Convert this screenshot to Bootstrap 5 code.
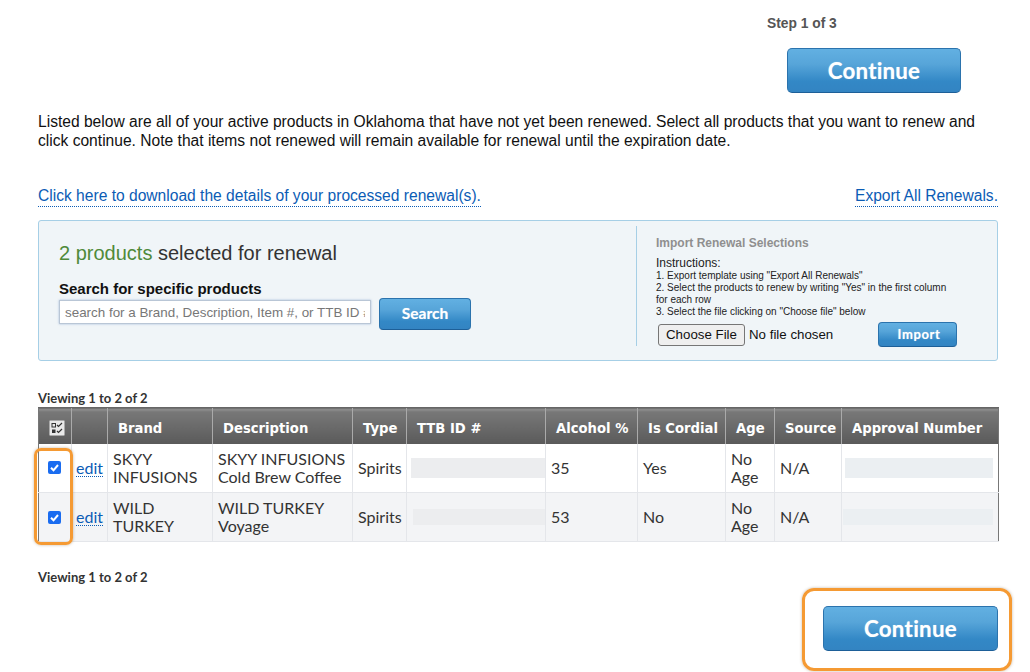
<!DOCTYPE html>
<html lang="en">
<head>
<meta charset="utf-8">
<title>Renewals</title>
<link rel="stylesheet" href="https://cdn.jsdelivr.net/npm/bootstrap@5.3.0/dist/css/bootstrap.min.css">
<style>
html,body{height:672px;overflow:hidden}
body{font-family:"Liberation Sans",Arial,sans-serif;background:#fff;color:#111;position:relative}
.page-wrap{padding:0 32px 0 38px}
.step-col{width:174px;margin-left:auto;margin-right:37px;padding-top:16px}
.step-label{font-size:13.8px;font-weight:700;color:#555;line-height:16px;margin-left:-20px}
.blue-btn{font-family:Lato,sans-serif;font-weight:700;color:#fff;background:linear-gradient(#62b0e2 0%,#57a5d9 35%,#3388c6 75%,#3384c2 100%);border:1px solid #2b73ad;border-bottom-color:#1d5f98;border-radius:5px;padding:0;text-shadow:0 0 1px rgba(255,255,255,.5);display:flex;align-items:center;justify-content:center}
.btn-top{width:174px;height:45px;font-size:22.3px;margin-top:16px;letter-spacing:.2px}
.intro{font-size:15.6px;line-height:19px;margin:19px 0 0;color:#111}
.link-row{margin-top:36px;font-size:15.6px;line-height:20px}
.link-row a{color:#0b5cb5;text-decoration:none;border-bottom:1px dotted #0b5cb5}
.panel-box{margin-top:13px;height:141px;background:#f0f5f8;border:1px solid #a6cfe6;border-radius:3px;display:flex}
.panel-left{width:597px;padding:18px 20px 0}
.count-line{font-size:20px;line-height:28px;color:#333;margin:0}
.count-line span{color:#4f8a3a}
.search-label{font-size:15px;font-weight:700;color:#111;line-height:18px;margin:13px 0 0}
.search-input{width:312px;height:24px;margin-top:2px;font-family:"Liberation Sans",sans-serif;font-size:13.4px;border:1px solid #b9c6d6;box-shadow:0 0 2px rgba(90,130,190,.5);padding:0 5px;background:#fff;border-radius:0;outline:0}
.search-input::placeholder{color:#777;opacity:1}
.btn-search{width:92px;height:32px;font-size:15.5px;border-radius:4px;margin-left:8px}
.panel-right{margin-top:5px;height:120px;border-left:1px solid #a6cfe6;padding:9px 0 0 19px;width:360px}
.import-title{font-size:12px;font-weight:700;color:#8f8f8f;line-height:16px}
.instr-head{font-size:12px;line-height:13px;margin-top:6px;color:#222}
.instr{font-size:10px;line-height:12px;color:#222;width:296px}
.file-row{margin-top:4px;align-items:center}
.choose-btn{font-size:13.3px;line-height:18px;background:#efefef;border:1px solid #767676;border-radius:3px;color:#111;padding:1px 7px;width:87px;height:22px;white-space:nowrap;margin-left:2px}
.nofile{font-size:13.3px;margin-left:4px;color:#111;width:129px}
.btn-import{width:79px;height:25px;font-size:13px;border-radius:4px;letter-spacing:.6px;padding-left:3px}
.view-line{font-family:Lato,sans-serif;font-weight:700;font-size:13px;color:#333;line-height:16px}
.view-top{margin-top:29px}
.view-bot{margin-top:27px}
.grid-tbl{table-layout:fixed;width:960px;border-collapse:collapse;margin:1px 0 0;font-family:Lato,sans-serif;border-left:1px solid #777;border-right:1px solid #777}
.grid-tbl th{height:36px;background:linear-gradient(#8a8a8a 0,#8a8a8a 2px,#787878 3px,#5a5a5a 100%);color:#fff;font-family:"DejaVu Sans",sans-serif;font-size:13.2px;font-weight:700;border-left:1px solid #aaa;border-top:1px solid #666;padding:7px 0 0 10px;white-space:nowrap;overflow:hidden}
.grid-tbl th:first-child{border-left:0;padding-top:5px}
.grid-tbl td{height:49px;font-size:16px;line-height:18px;color:#333;padding:0 0 0 5px;border:1px solid #e4e6ea;border-top:0;vertical-align:middle}
.grid-tbl td:first-child{border-left:0}
.grid-tbl td:last-child{border-right:0}
.grid-tbl tr.alt td{background:#f3f4f6}
.edit-link{color:#0b5cb5;text-decoration:none;border-bottom:1px dotted #0b5cb5;line-height:17px;display:inline-block}
.tick{width:13px;height:13px;border-radius:2px;background:#1a6cf0;display:block;margin:0 0 0 9px}
.tick svg{display:block}
.redact{background:#ecedef;height:20px;margin-left:-1px}
.alt .redact{height:16px;margin-left:1px}
.redact-blue{background:#ebeff2;margin:0 5px 0 -2px}
.alt .redact-blue{margin:0 5px 0 -4px}
.hl{position:absolute;border:3px solid #f59a33;border-radius:7px;box-shadow:0 0 3px rgba(120,90,50,.45);pointer-events:none}
.hl-check{left:34px;top:448px;width:39px;height:97px}
.hl-btn{left:802px;top:588px;width:210px;height:83px;border-radius:12px}
.btn-bot-row{margin-top:21px}
.btn-bot{width:175px;height:45px;font-size:22.3px;margin-left:auto;letter-spacing:.3px}
</style>
</head>
<body>
<div class="page-wrap">
  <div class="step-col">
    <div class="step-label">Step 1 of 3</div>
    <button type="button" class="blue-btn btn-top">Continue</button>
  </div>
  <p class="intro">Listed below are all of your active products in Oklahoma that have not yet been renewed. Select all products that you want to renew and click continue. Note that items not renewed will remain available for renewal until the expiration date.</p>
  <div class="link-row d-flex justify-content-between">
    <a href="#">Click here to download the details of your processed renewal(s).</a>
    <a href="#">Export All Renewals.</a>
  </div>
  <div class="panel-box">
    <div class="panel-left">
      <p class="count-line"><span>2 products</span> selected for renewal</p>
      <p class="search-label">Search for specific products</p>
      <div class="d-flex align-items-start">
        <input class="search-input" type="text" placeholder="search for a Brand, Description, Item #, or TTB ID #">
        <button type="button" class="blue-btn btn-search">Search</button>
      </div>
    </div>
    <div class="panel-right">
      <div class="import-title">Import Renewal Selections</div>
      <div class="instr-head">Instructions:</div>
      <div class="instr">1. Export template using "Export All Renewals"<br>2. Select the products to renew by writing "Yes" in the first column for each row<br>3. Select the file clicking on "Choose file" below</div>
      <div class="file-row d-flex">
        <span class="choose-btn">Choose File</span>
        <span class="nofile">No file chosen</span>
        <button type="button" class="blue-btn btn-import">Import</button>
      </div>
    </div>
  </div>
  <div class="view-line view-top">Viewing 1 to 2 of 2</div>
  <table class="grid-tbl">
    <colgroup>
      <col style="width:33px"><col style="width:36px"><col style="width:105px"><col style="width:140px"><col style="width:54px"><col style="width:139px"><col style="width:92px"><col style="width:88px"><col style="width:49px"><col style="width:67px"><col style="width:157px">
    </colgroup>
    <thead>
      <tr>
        <th>
          <svg width="16" height="16" viewBox="0 0 16 16" class="d-block"><rect x=".5" y=".5" width="15" height="15" rx="1" fill="#e9e9e9" stroke="#aaa"/><rect x="3" y="3.5" width="3.5" height="3.5" fill="none" stroke="#333"/><rect x="3" y="9.5" width="3.5" height="3.5" fill="#333"/><path d="M8 5l1.500 1.500L13 3M8 11l1.500 1.500L13 9" fill="none" stroke="#333" stroke-width="1.200"/></svg>
        </th>
        <th></th><th>Brand</th><th>Description</th><th>Type</th><th>TTB ID #</th><th>Alcohol %</th><th>Is Cordial</th><th>Age</th><th>Source</th><th>Approval Number</th>
      </tr>
    </thead>
    <tbody>
      <tr>
        <td class="p-0"><span class="tick"><svg width="13" height="13" viewBox="0 0 13 13"><path d="M3 6.800l2.500 2.500L10 4" fill="none" stroke="#fff" stroke-width="2"/></svg></span></td>
        <td class="ps-1"><a href="#" class="edit-link">edit</a></td>
        <td>SKYY INFUSIONS</td><td>SKYY INFUSIONS Cold Brew Coffee</td><td>Spirits</td>
        <td class="pe-0"><div class="redact"></div></td>
        <td>35</td><td>Yes</td><td>No Age</td><td>N/A</td>
        <td><div class="redact redact-blue"></div></td>
      </tr>
      <tr class="alt">
        <td class="p-0"><span class="tick"><svg width="13" height="13" viewBox="0 0 13 13"><path d="M3 6.800l2.500 2.500L10 4" fill="none" stroke="#fff" stroke-width="2"/></svg></span></td>
        <td class="ps-1"><a href="#" class="edit-link">edit</a></td>
        <td>WILD TURKEY</td><td>WILD TURKEY Voyage</td><td>Spirits</td>
        <td class="pe-0"><div class="redact"></div></td>
        <td>53</td><td>No</td><td>No Age</td><td>N/A</td>
        <td><div class="redact redact-blue"></div></td>
      </tr>
    </tbody>
  </table>
  <div class="view-line view-bot">Viewing 1 to 2 of 2</div>
  <div class="btn-bot-row d-flex">
    <button type="button" class="blue-btn btn-bot">Continue</button>
  </div>
</div>
<div class="hl hl-check"></div>
<div class="hl hl-btn"></div>
<script src="https://cdn.jsdelivr.net/npm/bootstrap@5.3.0/dist/js/bootstrap.bundle.min.js"></script>
</body>
</html>
